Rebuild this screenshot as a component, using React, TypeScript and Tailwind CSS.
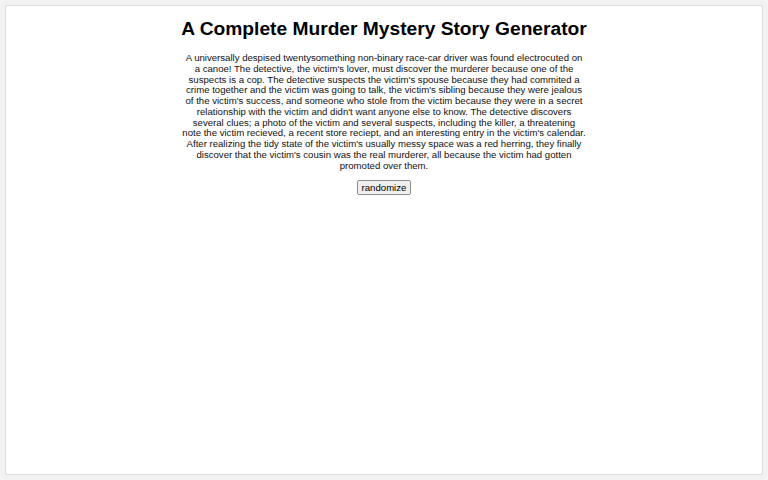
import { useState } from "react";

const STORY =
  "A universally despised twentysomething non-binary race-car driver was found electrocuted on a canoe! The detective, the victim's lover, must discover the murderer because one of the suspects is a cop. The detective suspects the victim's spouse because they had commited a crime together and the victim was going to talk, the victim's sibling because they were jealous of the victim's success, and someone who stole from the victim because they were in a secret relationship with the victim and didn't want anyone else to know. The detective discovers several clues; a photo of the victim and several suspects, including the killer, a threatening note the victim recieved, a recent store reciept, and an interesting entry in the victim's calendar. After realizing the tidy state of the victim's usually messy space was a red herring, they finally discover that the victim's cousin was the real murderer, all because the victim had gotten promoted over them.";

export default function App() {
  const [story] = useState(STORY);

  return (
    <div className="h-[480px] bg-[#f2f2f2] p-[5px] font-['Liberation_Sans',Arial,sans-serif]">
      <div className="flex h-full flex-col items-center border border-[#dcdcdc] bg-white pt-[10px]">
        <h1 className="text-[19.2px] font-bold leading-[26px] text-black">
          A Complete Murder Mystery Story Generator
        </h1>
        <p className="mt-[11px] w-[403.5px] text-center text-[9.6px] leading-[10.75px] text-[#111]">
          {story}
        </p>
        <button className="mt-[9px] rounded-[2px] border border-[#8f8f8f] bg-[#efefef] px-[4px] py-[1px] text-[9.6px] leading-[11px] text-black">
          randomize
        </button>
      </div>
    </div>
  );
}
